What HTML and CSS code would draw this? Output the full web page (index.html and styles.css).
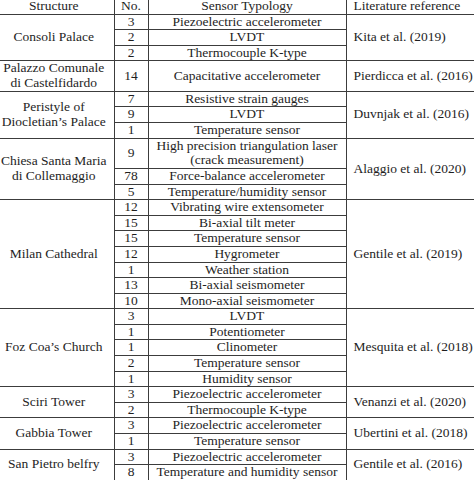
FILE: index.html
```html
<!DOCTYPE html>
<html>
<head>
<meta charset="utf-8">
<link rel="stylesheet" href="styles.css">
</head>
<body>
<table class="t">
<colgroup><col class="c1"><col class="c2"><col class="c3"><col class="c4"></colgroup>
<thead>
<tr class="r1"><th>Structure</th><th class="v">No.</th><th class="v">Sensor Typology</th><th class="v lit">Literature reference</th></tr>
</thead>
<tbody>
<tr class="r1"><td rowspan="3">Consoli Palace</td><td class="v">3</td><td class="v">Piezoelectric accelerometer</td><td rowspan="3" class="v lit">Kita et al. (2019)</td></tr>
<tr class="r1"><td class="v">2</td><td class="v">LVDT</td></tr>
<tr class="r1"><td class="v">2</td><td class="v">Thermocouple K-type</td></tr>

<tr class="r2"><td>Palazzo Comunale<br>di Castelfidardo</td><td class="v">14</td><td class="v">Capacitative accelerometer</td><td class="v lit">Pierdicca et al. (2016)</td></tr>

<tr class="r1"><td rowspan="3">Peristyle of<br>Diocletian’s Palace</td><td class="v">7</td><td class="v">Resistive strain gauges</td><td rowspan="3" class="v lit">Duvnjak et al. (2016)</td></tr>
<tr class="r1"><td class="v">9</td><td class="v">LVDT</td></tr>
<tr class="r1"><td class="v">1</td><td class="v">Temperature sensor</td></tr>

<tr class="r2"><td rowspan="3">Chiesa Santa Maria<br>di Collemaggio</td><td class="v">9</td><td class="v">High precision triangulation laser<br>(crack measurement)</td><td rowspan="3" class="v lit">Alaggio et al. (2020)</td></tr>
<tr class="r1"><td class="v">78</td><td class="v">Force-balance accelerometer</td></tr>
<tr class="r1"><td class="v">5</td><td class="v">Temperature/humidity sensor</td></tr>

<tr class="r1"><td rowspan="7">Milan Cathedral</td><td class="v">12</td><td class="v">Vibrating wire extensometer</td><td rowspan="7" class="v lit">Gentile et al. (2019)</td></tr>
<tr class="r1"><td class="v">15</td><td class="v">Bi-axial tilt meter</td></tr>
<tr class="r1"><td class="v">15</td><td class="v">Temperature sensor</td></tr>
<tr class="r1"><td class="v">12</td><td class="v">Hygrometer</td></tr>
<tr class="r1"><td class="v">1</td><td class="v">Weather station</td></tr>
<tr class="r1"><td class="v">13</td><td class="v">Bi-axial seismometer</td></tr>
<tr class="r1"><td class="v">10</td><td class="v">Mono-axial seismometer</td></tr>

<tr class="r1"><td rowspan="5">Foz Coa’s Church</td><td class="v">3</td><td class="v">LVDT</td><td rowspan="5" class="v lit">Mesquita et al. (2018)</td></tr>
<tr class="r1"><td class="v">1</td><td class="v">Potentiometer</td></tr>
<tr class="r1"><td class="v">1</td><td class="v">Clinometer</td></tr>
<tr class="r1"><td class="v">2</td><td class="v">Temperature sensor</td></tr>
<tr class="r1"><td class="v">1</td><td class="v">Humidity sensor</td></tr>

<tr class="r1"><td rowspan="2">Sciri Tower</td><td class="v">3</td><td class="v">Piezoelectric accelerometer</td><td rowspan="2" class="v lit">Venanzi et al. (2020)</td></tr>
<tr class="r1"><td class="v">2</td><td class="v">Thermocouple K-type</td></tr>

<tr class="r1"><td rowspan="2">Gabbia Tower</td><td class="v">3</td><td class="v">Piezoelectric accelerometer</td><td rowspan="2" class="v lit">Ubertini et al. (2018)</td></tr>
<tr class="r1"><td class="v">1</td><td class="v">Temperature sensor</td></tr>

<tr class="r1"><td rowspan="2">San Pietro belfry</td><td class="v">3</td><td class="v">Piezoelectric accelerometer</td><td rowspan="2" class="v lit">Gentile et al. (2016)</td></tr>
<tr class="r1"><td class="v">8</td><td class="v">Temperature and humidity sensor</td></tr>
</tbody>
</table>
</body>
</html>
```

FILE: styles.css
```css
html, body {
  margin: 0;
  padding: 0;
  background: #fff;
  overflow: hidden;
}
body {
  width: 474px;
  height: 481px;
}
.t {
  border-collapse: collapse;
  table-layout: fixed;
  width: 502px;
  margin-left: -6px;
  margin-top: -1px;
  font-family: "Liberation Serif", "DejaVu Serif", serif;
  font-size: 13.5px;
  color: #1e1e1e;
}
.c1 { width: 120px; }
.c2 { width: 34px; }
.c3 { width: 198px; }
.c4 { width: 150px; }
.t th, .t td {
  padding: 0;
  font-weight: normal;
  text-align: center;
  vertical-align: middle;
  line-height: 14.6px;
  border-top: 1px solid #3c3c3c;
  white-space: nowrap;
}
.t th { border-top: none; border-bottom: 1px solid #3c3c3c; }
.t .v { border-left: 1px solid #3c3c3c; }
.t .lit { text-align: left; padding-left: 7px; }
.r1 { height: 14.7px; }
.r2 { height: 30.4px; }
```
